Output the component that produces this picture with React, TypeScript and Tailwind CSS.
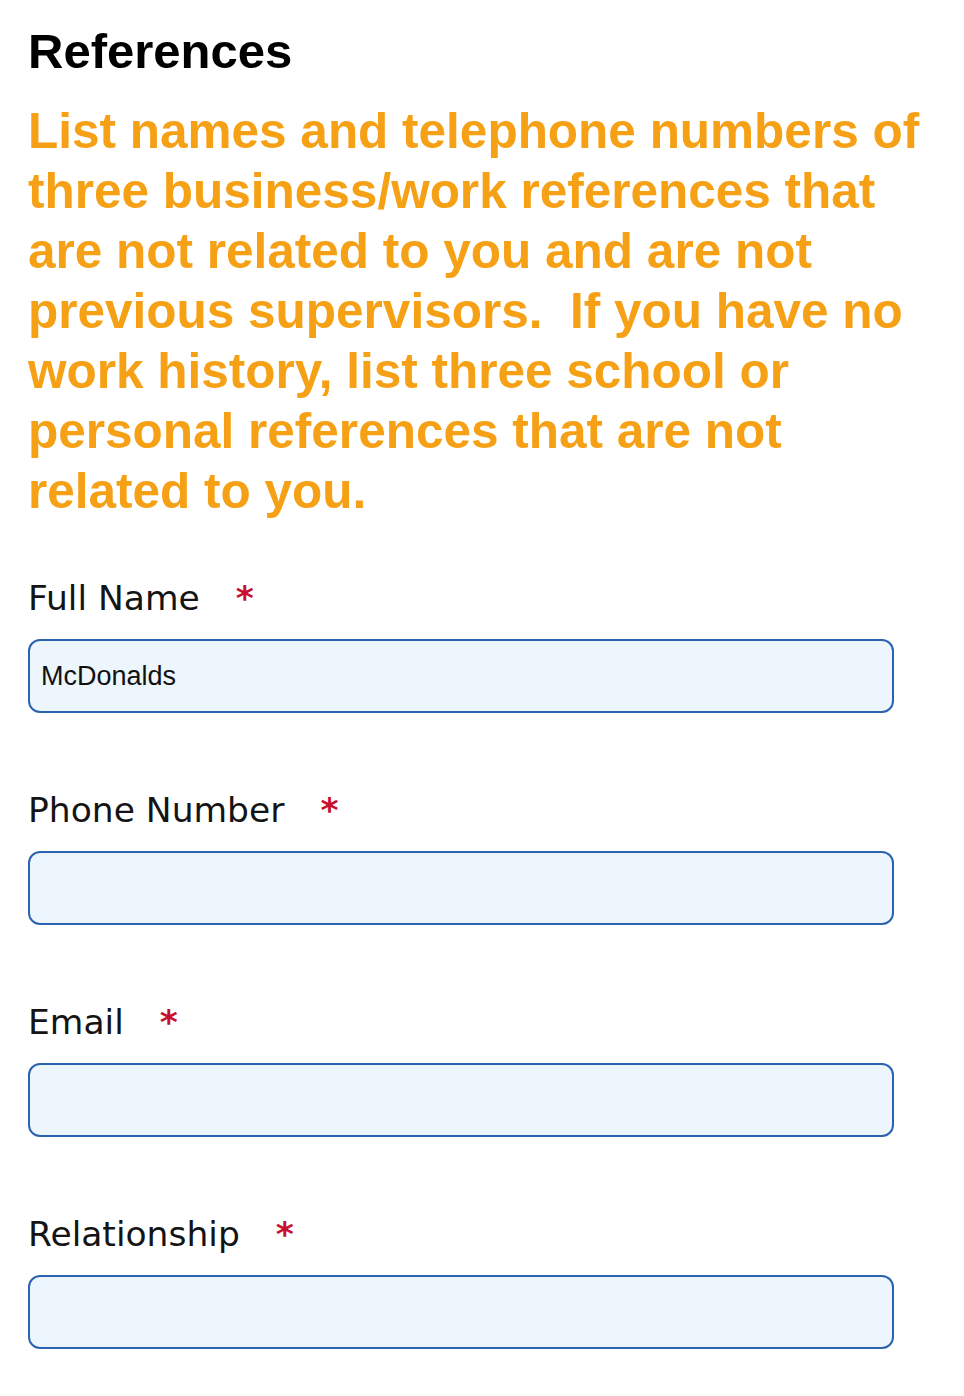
const fields = [
  { label: "Full Name", value: "McDonalds" },
  { label: "Phone Number", value: "" },
  { label: "Email", value: "" },
  { label: "Relationship", value: "" },
];

export default function App() {
  return (
    <div className="min-h-[1396px] bg-white pl-[28px] pr-[20px] pt-[23px]">
      <h1 className="font-['Liberation_Sans',Arial,sans-serif] text-[49px] leading-[56px] font-bold text-black">
        References
      </h1>
      <p className="mt-[22px] font-['Liberation_Sans',Arial,sans-serif] text-[49.5px] leading-[60px] font-bold text-[#f6a015]">
        List names and telephone numbers of three business/work references that are not related to you and are not
        previous supervisors.{"\u00a0"} If you have no work history, list three school or personal references that
        are not related to you.
      </p>
      <form className="mt-[57px] flex flex-col gap-[77px]">
        {fields.map((f) => (
          <div key={f.label} className="flex flex-col gap-[21px]">
            <label className="flex items-center font-['DejaVu_Sans',Verdana,sans-serif] text-[34.5px] leading-[40px] text-[#141414]">
              {f.label}
              <span className="ml-[36px] font-bold text-[#c8102e]">*</span>
            </label>
            <input
              defaultValue={f.value}
              className="h-[74px] w-[866px] rounded-[12px] border-[2.5px] border-[#2a63b0] bg-[#edf5fd] px-[11px] font-['Liberation_Sans',Arial,sans-serif] text-[27px] text-[#111] outline-none"
            />
          </div>
        ))}
      </form>
    </div>
  );
}
